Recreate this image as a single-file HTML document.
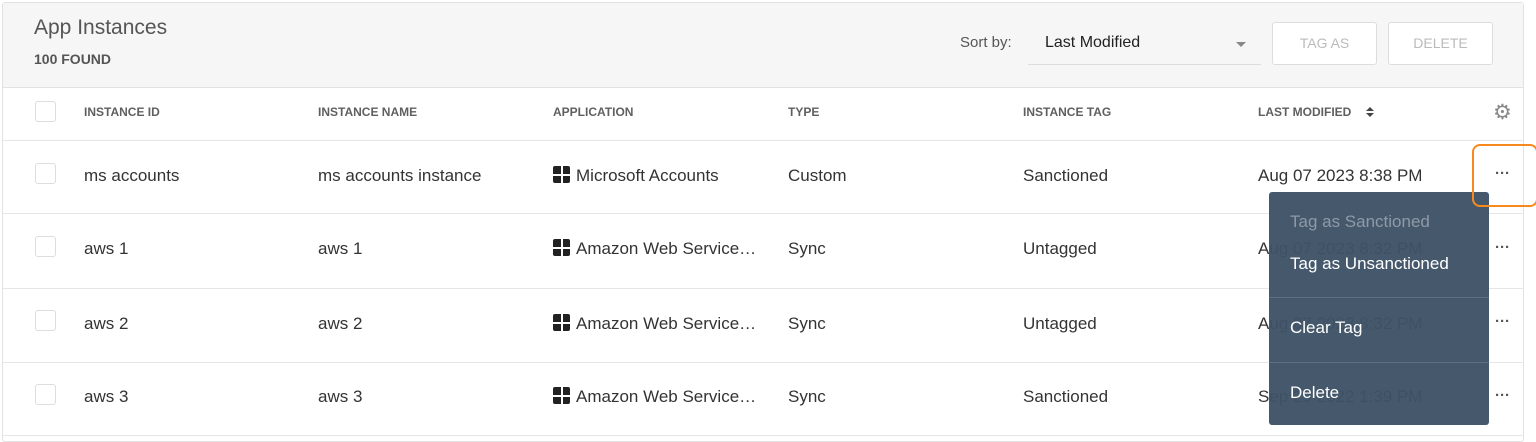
<!DOCTYPE html>
<html><head><style>
*{box-sizing:border-box;margin:0;padding:0}
body{width:1536px;height:436px;background:#fff;font-family:"Liberation Sans",sans-serif;color:#333;position:relative;overflow:hidden}
.wrap{position:absolute;left:2px;top:2px;width:1522px;height:440px;border:1px solid #e2e2e2;border-radius:3px}
.hdr{position:absolute;left:0;top:0;width:100%;height:85px;background:#f6f6f6;border-bottom:1px solid #e2e2e2}
.a{position:absolute;white-space:nowrap}
.th{font-size:12px;font-weight:bold;color:#5f5f5f;top:105px}
.row{position:absolute;left:3px;width:1521px;border-top:1px solid #e6e6e6}
.cb{position:absolute;left:35px;width:21px;height:21px;border:1px solid #ddd;border-radius:3px;background:#fff}
.td{font-size:17px;color:#333}
.btn{position:absolute;top:22px;height:43px;border:1px solid #ddd;border-radius:3px;background:#fff;color:#bbb;font-size:14px;text-align:center;line-height:41px}
.ico{display:inline-block;width:17px;height:17px;vertical-align:-2px;margin-right:6px;background:
linear-gradient(#fff,#fff) 8px 0/2px 17px no-repeat,linear-gradient(#fff,#fff) 0 8px/17px 2px no-repeat,#222;border-radius:2px}
.dots{position:absolute;font-size:15px;color:#555;letter-spacing:0px;font-weight:bold}
.menu{position:absolute;left:1269px;top:192px;width:220px;height:233px;background:rgba(62,82,102,0.96);border-radius:3px}
.mi{position:absolute;left:21px;font-size:17px;color:#fff}
.sep{position:absolute;left:0;width:220px;height:1px;background:#5d7082}
</style></head><body>
<div class="wrap"><div class="hdr"></div></div>
<div class="a" style="left:34px;top:16px;font-size:21px;color:#555">App Instances</div>
<div class="a" style="left:34px;top:51px;font-size:14px;font-weight:bold;color:#555">100 FOUND</div>
<div class="a" style="left:960px;top:34px;font-size:15px;color:#555">Sort by:</div>
<div class="a" style="left:1028px;top:64px;width:233px;height:1px;background:#ddd"></div>
<div class="a" style="left:1045px;top:34px;font-size:16px;color:#222">Last Modified</div>
<div class="a" style="left:1236px;top:42px;width:0;height:0;border-left:5px solid transparent;border-right:5px solid transparent;border-top:5px solid #888"></div>
<div class="btn" style="left:1272px;width:105px">TAG AS</div>
<div class="btn" style="left:1388px;width:105px">DELETE</div>

<div class="cb" style="top:101px"></div>
<div class="a th" style="left:84px">INSTANCE ID</div>
<div class="a th" style="left:318px">INSTANCE NAME</div>
<div class="a th" style="left:553px">APPLICATION</div>
<div class="a th" style="left:788px">TYPE</div>
<div class="a th" style="left:1023px">INSTANCE TAG</div>
<div class="a th" style="left:1258px">LAST MODIFIED</div>
<div class="a" style="left:1366px;top:107px;width:0;height:0;border-left:4px solid transparent;border-right:4px solid transparent;border-bottom:4px solid #444"></div>
<div class="a" style="left:1366px;top:113px;width:0;height:0;border-left:4px solid transparent;border-right:4px solid transparent;border-top:4px solid #444"></div>
<div class="a" style="left:1493px;top:100px;font-size:21px;color:#888">&#9881;</div>

<div class="row" style="top:140px"></div>
<div class="row" style="top:213px"></div>
<div class="row" style="top:288px"></div>
<div class="row" style="top:362px"></div>
<div class="row" style="top:435px"></div>

<div class="cb" style="top:163px"></div>
<div class="a td" style="left:84px;top:166px">ms accounts</div>
<div class="a td" style="left:318px;top:166px">ms accounts instance</div>
<div class="a td" style="left:553px;top:166px"><span class="ico"></span>Microsoft Accounts</div>
<div class="a td" style="left:788px;top:166px">Custom</div>
<div class="a td" style="left:1023px;top:166px">Sanctioned</div>
<div class="a td" style="left:1258px;top:166px">Aug 07 2023 8:38 PM</div>
<div class="dots" style="left:1495px;top:165px">···</div>

<div class="cb" style="top:236px"></div>
<div class="a td" style="left:84px;top:239px">aws 1</div>
<div class="a td" style="left:318px;top:239px">aws 1</div>
<div class="a td" style="left:553px;top:239px"><span class="ico"></span>Amazon Web Service…</div>
<div class="a td" style="left:788px;top:239px">Sync</div>
<div class="a td" style="left:1023px;top:239px">Untagged</div>
<div class="a td" style="left:1258px;top:239px">Aug 07 2023 8:32 PM</div>
<div class="dots" style="left:1495px;top:239px">···</div>

<div class="cb" style="top:310px"></div>
<div class="a td" style="left:84px;top:314px">aws 2</div>
<div class="a td" style="left:318px;top:314px">aws 2</div>
<div class="a td" style="left:553px;top:314px"><span class="ico"></span>Amazon Web Service…</div>
<div class="a td" style="left:788px;top:314px">Sync</div>
<div class="a td" style="left:1023px;top:314px">Untagged</div>
<div class="a td" style="left:1258px;top:314px">Aug 07 2023 8:32 PM</div>
<div class="dots" style="left:1495px;top:313px">···</div>

<div class="cb" style="top:384px"></div>
<div class="a td" style="left:84px;top:387px">aws 3</div>
<div class="a td" style="left:318px;top:387px">aws 3</div>
<div class="a td" style="left:553px;top:387px"><span class="ico"></span>Amazon Web Service…</div>
<div class="a td" style="left:788px;top:387px">Sync</div>
<div class="a td" style="left:1023px;top:387px">Sanctioned</div>
<div class="a td" style="left:1258px;top:387px">Sep 29 2022 1:39 PM</div>
<div class="dots" style="left:1495px;top:387px">···</div>

<div class="menu">
<div class="mi" style="top:20px;color:#8d9aa7">Tag as Sanctioned</div>
<div class="mi" style="top:62px">Tag as Unsanctioned</div>
<div class="sep" style="top:105px"></div>
<div class="mi" style="top:126px">Clear Tag</div>
<div class="sep" style="top:170px"></div>
<div class="mi" style="top:191px">Delete</div>
</div>
<div class="a" style="left:1472px;top:144px;width:66px;height:63px;border:2px solid #f7891f;border-radius:8px"></div>
</body></html>
